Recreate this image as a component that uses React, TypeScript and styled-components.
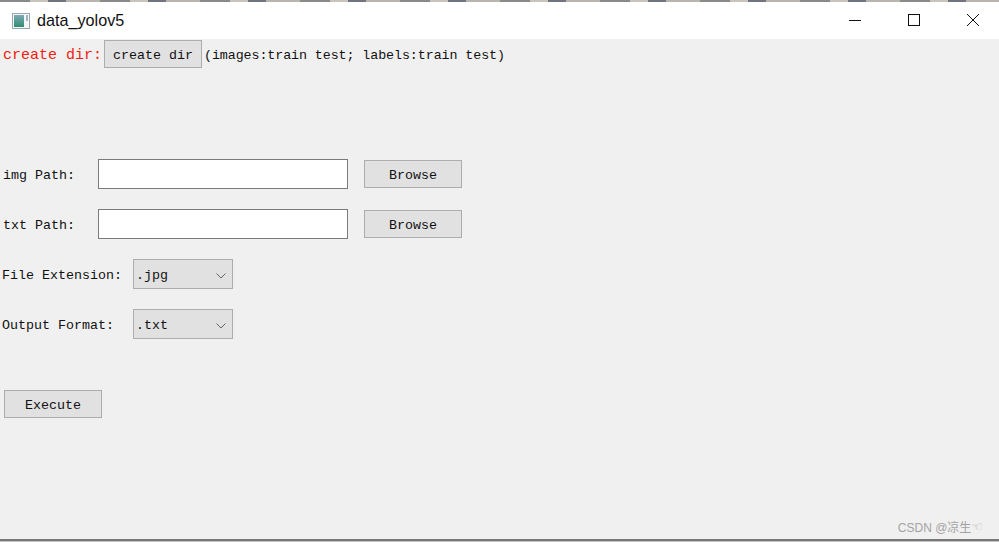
import React from "react";
import styled, { createGlobalStyle } from "styled-components";

const GlobalStyle = createGlobalStyle`
  html, body {
    margin: 0;
    padding: 0;
    background: #f0f0f0;
  }
  * {
    box-sizing: border-box;
  }
`;

const mono = `"Liberation Mono", "Noto Sans CJK SC", monospace`;

const ComboArrow = () => (
  <Chevron width="10" height="6" viewBox="0 0 10 6">
    <path d="M0.5 0.5L5 5L9.5 0.5" fill="none" stroke="#666" strokeWidth="1" />
  </Chevron>
);

const App = () => {
  return (
    <Page>
      <GlobalStyle />
      <TopStrip />
      <TitleBar>
        <TitleLeft>
          <AppIcon width="18" height="16" viewBox="0 0 18 16">
            <defs>
              <linearGradient id="pane" x1="0" y1="0" x2="0" y2="1">
                <stop offset="0" stopColor="#7fa7b8" />
                <stop offset="1" stopColor="#2f8f6f" />
              </linearGradient>
            </defs>
            <rect x="0.5" y="0.5" width="17" height="15" fill="#f4f6f7" stroke="#9aa5ae" />
            <rect x="2" y="2" width="10" height="12" fill="url(#pane)" />
            <rect x="14" y="2" width="2" height="6" fill="#9fb6c4" />
          </AppIcon>
          <Title>data_yolov5</Title>
        </TitleLeft>
        <WindowButtons>
          <WindowButton>
            <svg width="14" height="14" viewBox="0 0 14 14">
              <path d="M1 7.5H13" stroke="#111" strokeWidth="1" />
            </svg>
          </WindowButton>
          <WindowButton>
            <svg width="14" height="14" viewBox="0 0 14 14">
              <rect x="1.5" y="1.5" width="11" height="11" fill="none" stroke="#111" strokeWidth="1" />
            </svg>
          </WindowButton>
          <WindowButton>
            <svg width="14" height="14" viewBox="0 0 14 14">
              <path d="M1 1L13 13M13 1L1 13" stroke="#111" strokeWidth="1" />
            </svg>
          </WindowButton>
        </WindowButtons>
      </TitleBar>
      <Content>
        <DirRow>
          <RedLabel>create dir:</RedLabel>
          <DirButton type="button">create dir</DirButton>
          <Hint>(images:train test; labels:train test)</Hint>
        </DirRow>
        <Form>
          <PathRow>
            <Label>img Path:</Label>
            <PathInput />
            <BrowseButton type="button">Browse</BrowseButton>
          </PathRow>
          <PathRow>
            <Label>txt Path:</Label>
            <PathInput />
            <BrowseButton type="button">Browse</BrowseButton>
          </PathRow>
          <SelectRow>
            <SelectLabel>File Extension:</SelectLabel>
            <Combo>
              .jpg
              <ComboArrow />
            </Combo>
          </SelectRow>
          <SelectRow>
            <SelectLabel>Output Format:</SelectLabel>
            <Combo>
              .txt
              <ComboArrow />
            </Combo>
          </SelectRow>
        </Form>
        <ExecuteButton type="button">Execute</ExecuteButton>
      </Content>
      <Watermark>
        CSDN @凉生<HandGlyph>☜</HandGlyph>
      </Watermark>
      <BottomLine />
    </Page>
  );
};
export default App;

const Page = styled.div`
  position: relative;
  width: 999px;
  height: 542px;
  display: flex;
  flex-direction: column;
  overflow: hidden;
  background: #f0f0f0;
`;
const TopStrip = styled.div`
  height: 2px;
  flex: none;
  background: repeating-linear-gradient(
    90deg,
    #8a8a8a 0 30px,
    #c9c4bb 30px 48px,
    #6f7480 48px 66px,
    #b9b5ae 66px 100px
  );
`;
const TitleBar = styled.div`
  height: 37px;
  flex: none;
  background: #ffffff;
  display: flex;
  align-items: center;
  justify-content: space-between;
`;
const TitleLeft = styled.div`
  display: flex;
  align-items: center;
  padding-left: 12px;
  gap: 7px;
`;
const AppIcon = styled.svg`
  display: block;
`;
const Title = styled.span`
  font-family: "Liberation Sans", Arial, sans-serif;
  font-size: 16.2px;
  color: #111;
`;
const WindowButtons = styled.div`
  display: flex;
  gap: 29px;
  padding-right: 11px;
`;
const WindowButton = styled.div`
  width: 30px;
  height: 37px;
  padding-bottom: 2px;
  display: flex;
  align-items: center;
  justify-content: center;
`;
const Content = styled.div`
  flex: 1;
  display: flex;
  flex-direction: column;
  font-family: ${mono};
  color: #111;
`;
const DirRow = styled.div`
  display: flex;
  align-items: center;
  height: 28px;
  margin-top: 1px;
  padding-left: 3px;
`;
const RedLabel = styled.span`
  font-size: 15px;
  color: #f02010;
  width: 101px;
  padding-top: 3px;
`;
const baseButton = `
  font-family: ${mono};
  font-size: 13.33px;
  color: #111;
  background: #e1e1e1;
  border: 1px solid #adadad;
  border-radius: 0;
  padding: 3px 0 0;
`;
const DirButton = styled.button`
  ${baseButton}
  width: 98px;
  height: 28px;
`;
const Hint = styled.span`
  font-size: 13.33px;
  letter-spacing: -0.08px;
  margin-left: 2px;
  padding-top: 3px;
`;
const Form = styled.div`
  display: flex;
  flex-direction: column;
  gap: 20px;
  margin-top: 91px;
`;
const PathRow = styled.div`
  display: flex;
  align-items: center;
  height: 30px;
`;
const Label = styled.span`
  font-size: 13.33px;
  width: 98px;
  padding: 2px 0 0 3px;
`;
const PathInput = styled.input`
  width: 250px;
  height: 30px;
  background: #fff;
  border: 1px solid #7a7a7a;
  border-radius: 0;
  outline: none;
  padding: 0 2px;
`;
const BrowseButton = styled.button`
  ${baseButton}
  width: 98px;
  height: 28px;
  margin-left: 16px;
`;
const SelectRow = styled.div`
  display: flex;
  align-items: center;
  height: 30px;
`;
const SelectLabel = styled.span`
  font-size: 13.33px;
  width: 133px;
  padding: 2px 0 0 2px;
`;
const Combo = styled.div`
  width: 100px;
  height: 30px;
  background: #e1e1e1;
  border: 1px solid #adadad;
  display: flex;
  align-items: center;
  justify-content: space-between;
  padding: 3px 6px 0 2px;
  font-size: 13.33px;
`;
const Chevron = styled.svg`
  display: block;
`;
const ExecuteButton = styled.button`
  ${baseButton}
  width: 98px;
  height: 28px;
  margin: 51px 0 0 4px;
`;
const Watermark = styled.div`
  position: absolute;
  right: 16px;
  bottom: 7px;
  font-family: "Liberation Sans", "Noto Sans CJK SC", sans-serif;
  font-size: 12px;
  color: #a3a3a3;
  display: flex;
  align-items: center;
`;
const HandGlyph = styled.span`
  font-family: "DejaVu Sans", sans-serif;
  font-size: 13px;
  line-height: 1;
  color: #c4c4c4;
`;
const BottomLine = styled.div`
  position: absolute;
  left: 0;
  right: 0;
  bottom: 0;
  height: 3px;
  background: linear-gradient(#777 0 2px, #c4c4c4 2px);
`;
